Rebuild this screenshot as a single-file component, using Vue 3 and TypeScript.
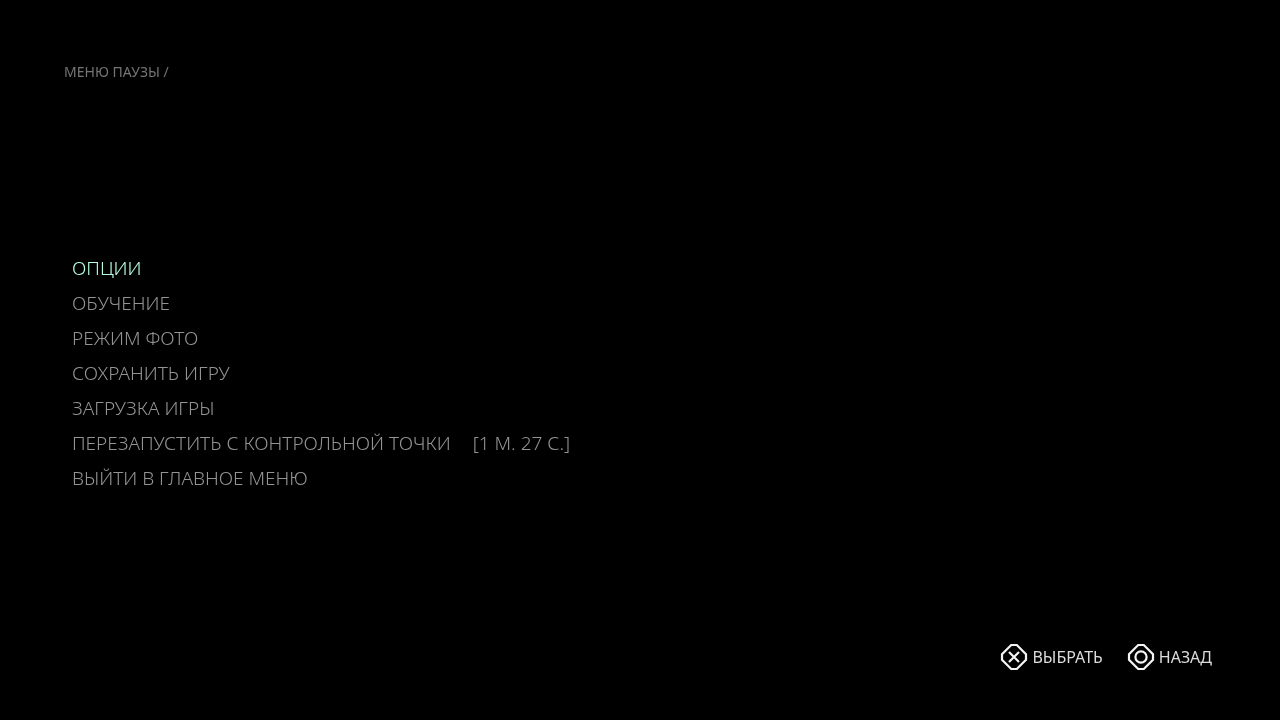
<script setup lang="ts">
import { ref } from 'vue'

interface MenuItem {
  id: string
  label: string
  note?: string
}

const items: MenuItem[] = [
  { id: 'options', label: 'ОПЦИИ' },
  { id: 'tutorial', label: 'ОБУЧЕНИЕ' },
  { id: 'photo', label: 'РЕЖИМ ФОТО' },
  { id: 'save', label: 'СОХРАНИТЬ ИГРУ' },
  { id: 'load', label: 'ЗАГРУЗКА ИГРЫ' },
  { id: 'restart', label: 'ПЕРЕЗАПУСТИТЬ С КОНТРОЛЬНОЙ ТОЧКИ', note: '[1 М. 27 С.]' },
  { id: 'quit', label: 'ВЫЙТИ В ГЛАВНОЕ МЕНЮ' },
]

const selected = ref('options')
</script>

<template>
  <main class="pause">
    <h1 class="crumb">МЕНЮ ПАУЗЫ /</h1>
    <nav class="menu" aria-label="МЕНЮ ПАУЗЫ">
      <button
        v-for="item in items"
        :key="item.id"
        type="button"
        class="item"
        :class="{ active: item.id === selected }"
        @click="selected = item.id"
      >
        <span>{{ item.label }}</span>
        <span v-if="item.note">{{ item.note }}</span>
      </button>
    </nav>
    <footer class="hints">
      <button type="button" class="hint">
        <svg class="glyph" viewBox="0 0 28 28" aria-hidden="true">
          <path d="M11.2 2h5.6L26 11.2v5.6L16.8 26h-5.6L2 16.8v-5.6z" />
          <path d="M9 9l10 10M19 9L9 19" />
        </svg>
        <span>ВЫБРАТЬ</span>
      </button>
      <button type="button" class="hint">
        <svg class="glyph" viewBox="0 0 28 28" aria-hidden="true">
          <path d="M11.2 2h5.6L26 11.2v5.6L16.8 26h-5.6L2 16.8v-5.6z" />
          <circle cx="14" cy="14" r="5.6" />
        </svg>
        <span>НАЗАД</span>
      </button>
    </footer>
  </main>
</template>

<style>
body {
  background: #000;
}
</style>

<style scoped>
.pause {
  box-sizing: border-box;
  display: flex;
  flex-direction: column;
  min-height: 100vh;
  padding: 60px 68px 49px 64px;
  color: #747474;
  font-family: "Noto Sans", "Open Sans", sans-serif;
  font-weight: 400;
  will-change: opacity;
}

.crumb {
  margin: 0;
  font-size: 14px;
  font-weight: 400;
  line-height: 24px;
}

.menu {
  display: flex;
  flex-direction: column;
  align-items: flex-start;
  margin-top: 167px;
  padding-left: 8px;
}

button {
  margin: 0;
  padding: 0;
  border: 0;
  background: none;
  color: inherit;
  font: inherit;
  cursor: pointer;
}

.item {
  display: flex;
  gap: 22px;
  color: #949494;
  font-size: 19px;
  font-weight: 300;
  line-height: 35px;
  white-space: nowrap;
}

.item.active {
  color: #b8ffe2;
}

.hints {
  display: flex;
  justify-content: flex-end;
  gap: 24px;
  margin-top: auto;
}

.hint {
  display: flex;
  align-items: center;
  gap: 4px;
  color: #dcdcdc;
  font-size: 16px;
  line-height: 28px;
}

.glyph {
  width: 28px;
  height: 28px;
  fill: none;
  stroke: #f4f4f4;
  stroke-width: 2.2;
}
</style>
